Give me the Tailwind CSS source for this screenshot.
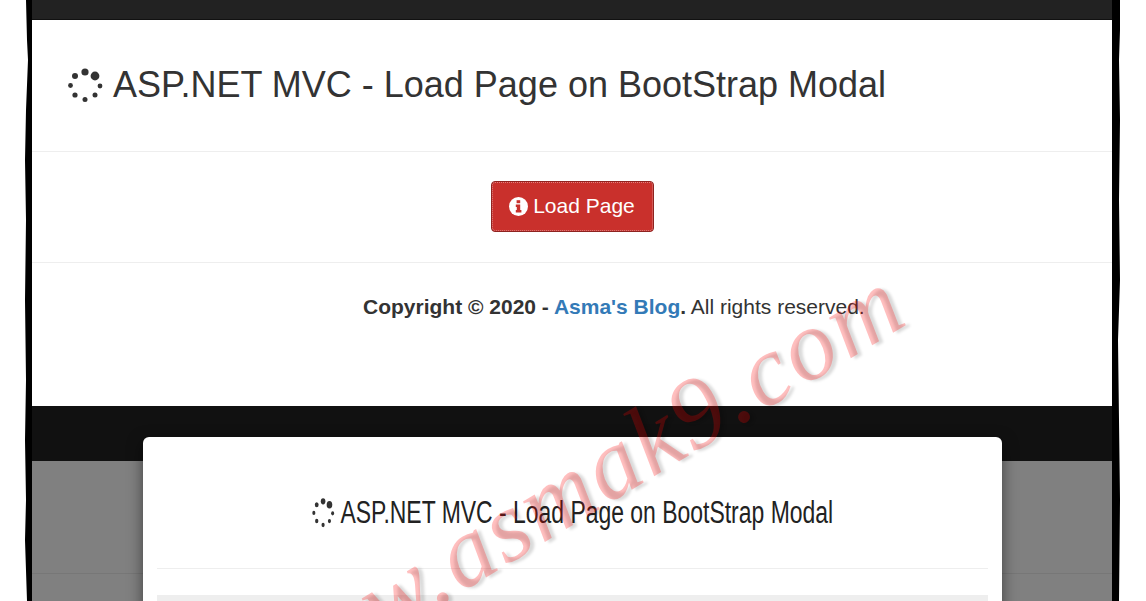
<!DOCTYPE html>
<html lang="en">
<head>
  <meta charset="UTF-8">
  <title>ASP.NET MVC - Load Page on BootStrap Modal</title>
  <script src="https://cdn.jsdelivr.net/npm/@tailwindcss/browser@4"></script>
</head>
<body class="bg-white overflow-hidden font-['Liberation_Sans',Arial,sans-serif] text-[#333]">
<div class="relative flex w-[1146px] h-[601px] overflow-hidden">

  <!-- hand drawn left edge -->
  <svg class="w-[32px] h-[601px] shrink-0" viewBox="0 0 32 601"><path d="M26 0 L27 40 L28 60 L26 110 L25 160 L26 220 L25 300 L26 380 L25 440 L26 500 L25 540 L27 601 L32 601 L32 0 Z" fill="#000"/></svg>

  <main class="relative w-[1080px] h-[601px] shrink-0 flex flex-col">
    <div class="h-[20px] shrink-0 bg-[#222] border-b border-[#111]"></div>

    <section class="h-[386px] shrink-0 bg-white">
      <header class="h-[132px] border-b border-[#eee] pl-[35px] pb-[2px] flex items-center gap-[10px]">
        <svg class="w-[36px] h-[36px]" viewBox="0 0 36 36" fill="#333">
          <circle cx="18" cy="5" r="3.6"/><circle cx="28" cy="9" r="4.4"/><circle cx="33" cy="19" r="2.4"/><circle cx="28" cy="28" r="2.5"/>
          <circle cx="18" cy="32.5" r="2.5"/><circle cx="8" cy="28" r="2.6"/><circle cx="3.5" cy="18.5" r="2.4"/><circle cx="8" cy="9" r="3"/>
        </svg>
        <h1 class="text-[36px] leading-none">ASP.NET MVC - Load Page on BootStrap Modal</h1>
      </header>
      <div class="h-[111px] border-b border-[#eee] pb-[2px] flex items-center justify-center">
        <button class="w-[163px] h-[51px] flex items-center justify-center gap-[5px] bg-[#c9302c] border border-[#8f2320] rounded-[4px] outline outline-dotted outline-white/40 -outline-offset-2 text-white text-[21px]">
          <svg class="w-[19px] h-[19px]" viewBox="0 0 19 19"><circle cx="9.5" cy="9.5" r="9.5" fill="#fff"/><rect x="7.6" y="3.2" width="3.6" height="3" fill="#c9302c"/><path d="M6.8 7.6h4.4v5.4h1.2v2.4H6.8V13h1V10H6.8z" fill="#c9302c"/></svg>
          Load Page
        </button>
      </div>
      <p class="pl-[331px] pt-[30px] text-[21px] leading-[28px]"><b>Copyright © 2020 - <a class="text-[#337ab7]" href="#">Asma's Blog</a>.</b> All rights reserved.</p>
    </section>

    <div class="h-[55px] shrink-0 bg-[#111]"></div>
    <div class="flex-1 bg-[#808080]">
      <div class="h-[113px] border-b border-[#777]"></div>
    </div>

    <!-- modal over the backdrop -->
    <div class="absolute left-[111px] top-[437px] w-[859px] h-[200px] bg-white rounded-[6px] px-[14px] shadow-[0_5px_15px_rgba(0,0,0,0.5)]">
      <div class="h-[132px] border-b border-[#eee] flex items-center justify-center">
        <div class="flex items-center gap-[8px] whitespace-nowrap text-[#222] scale-x-[0.74] pt-[20px]">
          <svg class="w-[31px] h-[31px] shrink-0" viewBox="0 0 36 36" fill="#333">
            <circle cx="18" cy="5" r="3.6"/><circle cx="28" cy="9" r="4.4"/><circle cx="33" cy="19" r="2.4"/><circle cx="28" cy="28" r="2.5"/>
            <circle cx="18" cy="32.5" r="2.5"/><circle cx="8" cy="28" r="2.6"/><circle cx="3.5" cy="18.5" r="2.4"/><circle cx="8" cy="9" r="3"/>
          </svg>
          <h2 class="text-[31px] leading-none">ASP.NET MVC - Load Page on BootStrap Modal</h2>
        </div>
      </div>
      <div class="mt-[26px] h-[40px] bg-[#eee]"></div>
    </div>
  </main>

  <!-- hand drawn right edge -->
  <svg class="w-[34px] h-[601px] shrink-0" viewBox="0 0 34 601"><path d="M0 0 L8 0 L8 30 L7 60 L8 120 L7 200 L8 280 L6 340 L7 420 L8 500 L7 601 L0 601 Z" fill="#000"/></svg>

  <!-- watermark -->
  <div class="absolute left-[192px] top-[436px] w-[764px] -rotate-[31deg] whitespace-nowrap font-['Liberation_Serif',serif] italic text-[100px] leading-none tracking-[3px] text-[#ff0000]/25 [text-shadow:3px_3px_3px_rgba(0,0,0,0.15)] pointer-events-none">www.asmak9.com</div>
</div>
</body>
</html>
